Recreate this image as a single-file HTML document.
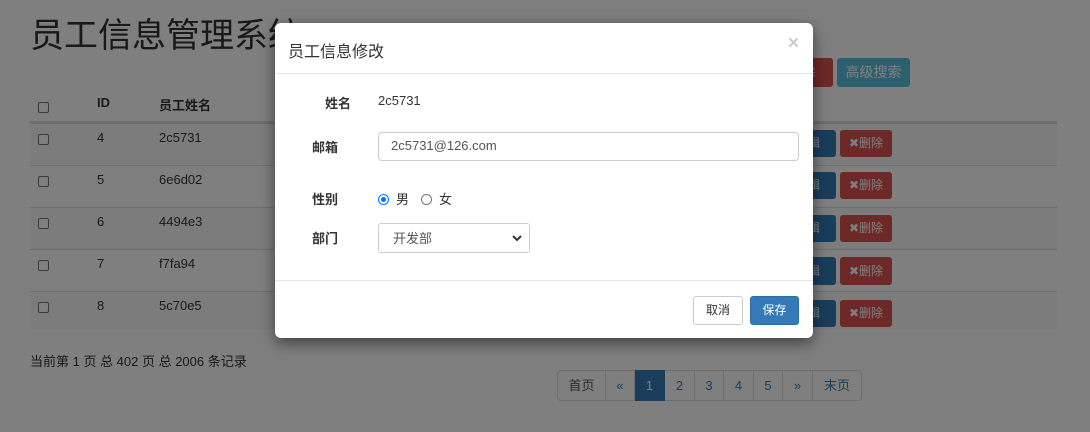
<!DOCTYPE html>
<html><head><meta charset="utf-8"><style>
*{box-sizing:border-box;margin:0;padding:0}
body{width:1090px;height:432px;overflow:hidden;background:#fff;font-family:"Liberation Sans","Noto Sans CJK SC",sans-serif;font-size:13px;color:#333;position:relative}
.a{position:absolute;white-space:nowrap}
.cb{position:absolute;width:11px;height:11px;border:1px solid #767676;border-radius:2px;background:#fff}
.row{position:absolute;left:30px;width:1027px;height:42px;border-top:1px solid #ddd}
.btn{position:absolute;border-radius:3px;color:#fff;font-size:12px;text-align:center}
.ov{position:absolute;left:0;top:0;width:1090px;height:432px;background:rgba(0,0,0,.5)}
.pg{position:absolute;top:370px;height:31px;border:1px solid #ddd;border-left:none;line-height:29px;text-align:center;color:#337ab7;background:#fff}
</style></head><body>
<div class="a" style="left:30px;top:8px;font-size:34px;color:#333">员工信息管理系统</div>
<div class="btn" style="left:770px;top:58px;width:63px;height:29px;background:#d9534f;line-height:29px;font-size:14px">删除</div>
<div class="btn" style="left:837px;top:58px;width:73px;height:29px;background:#5bc0de;line-height:29px;font-size:14px">高级搜索</div>
<div class="cb" style="left:38px;top:102px"></div>
<div class="a" style="left:97px;top:95px;font-weight:bold">ID</div>
<div class="a" style="left:159px;top:95px;font-weight:bold">员工姓名</div>
<div class="a" style="left:30px;top:121px;width:1027px;height:2px;background:#ddd"></div>
<div class="row" style="top:123px;background:#f9f9f9"></div>
<div class="row" style="top:165px"></div>
<div class="row" style="top:207px;background:#f9f9f9"></div>
<div class="row" style="top:249px"></div>
<div class="row" style="top:291px;background:#f9f9f9;height:38px"></div>
<div class="cb" style="left:38px;top:134px"></div><div class="a" style="left:97px;top:130px">4</div><div class="a" style="left:159px;top:130px">2c5731</div>
<div class="cb" style="left:38px;top:176px"></div><div class="a" style="left:97px;top:172px">5</div><div class="a" style="left:159px;top:172px">6e6d02</div>
<div class="cb" style="left:38px;top:218px"></div><div class="a" style="left:97px;top:214px">6</div><div class="a" style="left:159px;top:214px">4494e3</div>
<div class="cb" style="left:38px;top:260px"></div><div class="a" style="left:97px;top:256px">7</div><div class="a" style="left:159px;top:256px">f7fa94</div>
<div class="cb" style="left:38px;top:302px"></div><div class="a" style="left:97px;top:298px">8</div><div class="a" style="left:159px;top:298px">5c70e5</div>
<div class="btn" style="left:780px;top:130px;width:56px;height:27px;background:#337ab7;line-height:27px">编辑</div><div class="btn" style="left:840px;top:130px;width:52px;height:27px;background:#d9534f;line-height:27px">✖删除</div>
<div class="btn" style="left:780px;top:172px;width:56px;height:27px;background:#337ab7;line-height:27px">编辑</div><div class="btn" style="left:840px;top:172px;width:52px;height:27px;background:#d9534f;line-height:27px">✖删除</div>
<div class="btn" style="left:780px;top:215px;width:56px;height:27px;background:#337ab7;line-height:27px">编辑</div><div class="btn" style="left:840px;top:215px;width:52px;height:27px;background:#d9534f;line-height:27px">✖删除</div>
<div class="btn" style="left:780px;top:257px;width:56px;height:28px;background:#337ab7;line-height:28px">编辑</div><div class="btn" style="left:840px;top:257px;width:52px;height:28px;background:#d9534f;line-height:28px">✖删除</div>
<div class="btn" style="left:780px;top:300px;width:56px;height:27px;background:#337ab7;line-height:27px">编辑</div><div class="btn" style="left:840px;top:300px;width:52px;height:27px;background:#d9534f;line-height:27px">✖删除</div>
<div class="a" style="left:30px;top:351px">当前第 1 页 总 402 页 总 2006 条记录</div>
<div class="pg" style="left:557px;width:49px;border-left:1px solid #ddd;border-radius:4px 0 0 4px;color:#555">首页</div>
<div class="pg" style="left:606px;width:29px">«</div>
<div class="pg" style="left:635px;width:30px;background:#337ab7;border-color:#337ab7;color:#fff">1</div>
<div class="pg" style="left:665px;width:30px">2</div>
<div class="pg" style="left:695px;width:29px">3</div>
<div class="pg" style="left:724px;width:30px">4</div>
<div class="pg" style="left:754px;width:29px">5</div>
<div class="pg" style="left:783px;width:30px">»</div>
<div class="pg" style="left:813px;width:49px;border-radius:0 4px 4px 0">末页</div>
<div class="ov"></div>
<div class="a" style="left:275px;top:23px;width:538px;height:315px;background:#fff;border-radius:6px;box-shadow:0 5px 15px rgba(0,0,0,.5)">
 <div class="a" style="left:13px;top:15px;font-size:16px;color:#333">员工信息修改</div>
 <div class="a" style="left:513px;top:10px;font-size:19px;color:#ccc;font-weight:bold">×</div>
 <div class="a" style="left:0;top:50px;width:538px;height:1px;background:#e5e5e5"></div>
 <div class="a" style="left:50px;top:70px;font-weight:bold">姓名</div>
 <div class="a" style="left:103px;top:70px">2c5731</div>
 <div class="a" style="left:37px;top:114px;font-weight:bold">邮箱</div>
 <div class="a" style="left:103px;top:109px;width:421px;height:29px;border:1px solid #ccc;border-radius:4px;padding:5px 12px;font-size:13px;color:#555">2c5731@126.com</div>
 <div class="a" style="left:37px;top:166px;font-weight:bold">性别</div>
 <div class="a" style="left:103px;top:171px;width:11px;height:11px;border-radius:50%;border:1px solid #0075ff;background:#fff"><div style="margin:2px;width:5px;height:5px;border-radius:50%;background:#0075ff"></div></div>
 <div class="a" style="left:121px;top:166px">男</div>
 <div class="a" style="left:146px;top:171px;width:11px;height:11px;border-radius:50%;border:1px solid #767676"></div>
 <div class="a" style="left:164px;top:166px">女</div>
 <div class="a" style="left:37px;top:205px;font-weight:bold">部门</div>
 <div class="a" style="left:103px;top:200px;width:152px;height:30px;border:1px solid #ccc;border-radius:3px;padding:4px 14px;color:#555">开发部
  <svg style="position:absolute;right:7px;top:11px" width="10" height="7" viewBox="0 0 10 7"><path d="M1 1l4 4 4-4" stroke="#333" stroke-width="2" fill="none"/></svg></div>
 <div class="a" style="left:0;top:257px;width:538px;height:1px;background:#e5e5e5"></div>
 <div class="a" style="left:418px;top:273px;width:50px;height:29px;border:1px solid #ccc;border-radius:3px;text-align:center;line-height:27px;font-size:12px">取消</div>
 <div class="a" style="left:475px;top:273px;width:49px;height:29px;background:#337ab7;border:1px solid #2e6da4;border-radius:3px;text-align:center;line-height:27px;font-size:12px;color:#fff">保存</div>
</div>
</body></html>
